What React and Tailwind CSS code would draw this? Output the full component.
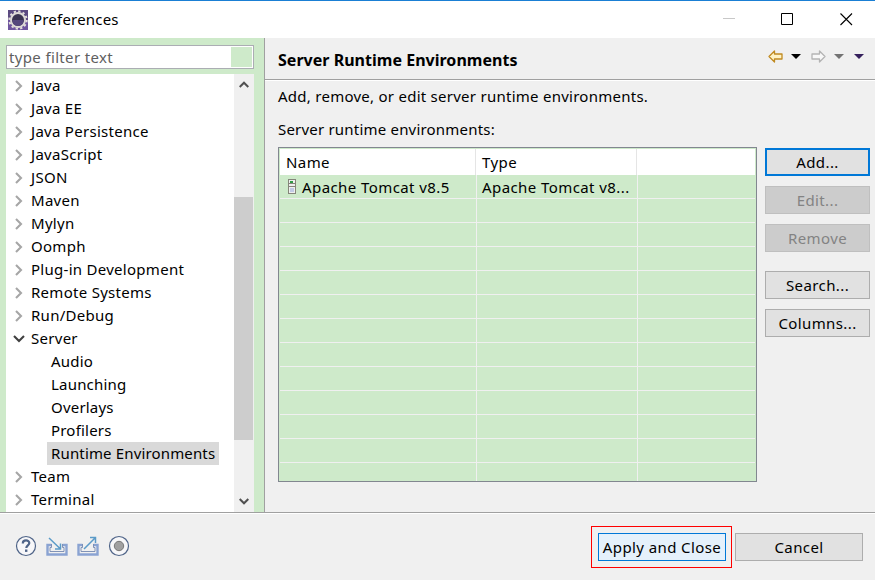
import React from "react";

const treeItems = [
  { label: "Java" },
  { label: "Java EE" },
  { label: "Java Persistence" },
  { label: "JavaScript" },
  { label: "JSON" },
  { label: "Maven" },
  { label: "Mylyn" },
  { label: "Oomph" },
  { label: "Plug-in Development" },
  { label: "Remote Systems" },
  { label: "Run/Debug" },
  { label: "Server", open: true },
  { label: "Audio", child: true },
  { label: "Launching", child: true },
  { label: "Overlays", child: true },
  { label: "Profilers", child: true },
  { label: "Runtime Environments", child: true, selected: true },
  { label: "Team" },
  { label: "Terminal" },
];

const rows = [
  { name: "Apache Tomcat v8.5", type: "Apache Tomcat v8..." },
  ...Array(12).fill({}),
];

function GearIcon() {
  return (
    <svg width="20" height="20" viewBox="0 0 20 20">
      <rect width="20" height="20" fill="#5b4a80" />
      <rect y="10" width="20" height="10" fill="#6f559f" />
      <circle cx="10" cy="10" r="8.7" fill="none" stroke="#e4e0dc" strokeWidth="2" strokeDasharray="2.28 2.27" />
      <circle cx="10" cy="10" r="7" fill="#3a3350" stroke="#dedad6" strokeWidth="2" />
      <path d="M4.5 10h11v1.5a5.5 4.5 0 0 1-11 0z" fill="#55477c" />
    </svg>
  );
}

function Chevron({ open }) {
  return open ? (
    <svg width="12" height="8" viewBox="0 0 12 8" fill="none">
      <path d="M1 1l5 5 5-5" stroke="#404040" strokeWidth="2.1" />
    </svg>
  ) : (
    <svg width="8" height="12" viewBox="0 0 8 12" fill="none">
      <path d="M1 1l5 5-5 5" stroke="#a6a6a6" strokeWidth="2.1" />
    </svg>
  );
}

function ScrollArrow({ down }) {
  return (
    <svg width="10" height="7" viewBox="0 0 10 7" fill="none">
      <path d={down ? "M0.7 1l4.3 4.3L9.3 1" : "M0.7 6L5 1.7 9.3 6"} stroke="#505050" strokeWidth="2" />
    </svg>
  );
}

function Arrow({ forward }) {
  return (
    <svg width="15" height="13" viewBox="0 0 15 13">
      <path
        d={forward ? "M14 6.5L8.5 1v3h-7.5v5h7.5v3z" : "M1 6.5L6.5 1v3h7.5v5h-7.5v3z"}
        fill={forward ? "#f8f8f8" : "#fff3c4"}
        stroke={forward ? "#b4b4b4" : "#c08a20"}
        strokeWidth="1.3"
        strokeLinejoin="round"
      />
    </svg>
  );
}

function Caret({ color }) {
  return (
    <svg width="10" height="5" viewBox="0 0 10 5">
      <path d="M0 0h10L5 5z" fill={color} />
    </svg>
  );
}

function ServerIcon() {
  return (
    <svg width="8" height="15" viewBox="0 0 8 15">
      <rect x="0.5" y="0.5" width="7" height="14" fill="#eef0ee" stroke="#85857a" />
      <path d="M1 4.5h6M1 7.5h6" stroke="#85857a" />
      <rect x="2" y="2" width="3" height="2" fill="#2f9a45" />
      <rect x="2" y="9" width="4" height="4" fill="#c3cbe6" />
    </svg>
  );
}

function TrayIcon({ exporting }) {
  return (
    <svg width="22" height="20" viewBox="0 0 22 20" fill="none">
      <path d="M5.5 9H1.5v9.5h19V9h-4" stroke="#8aa3d2" strokeWidth="2.4" />
      <path d="M5.5 8v3.5h-1.5v4h14v-4h-1.5V8" stroke="#7488b0" strokeWidth="0.9" />
      {exporting ? (
        <path d="M7 13L18 2M13 1.5h5.5V7" stroke="#5b9bc8" strokeWidth="1.5" />
      ) : (
        <path d="M3 2l11 10.5M14.5 7.5V13H9" stroke="#5b9bc8" strokeWidth="1.5" />
      )}
    </svg>
  );
}

function Button({ children, className }) {
  return (
    <button className={`flex h-7 items-center justify-center whitespace-nowrap leading-[23px] tracking-[0.4px] ${className}`}>
      {children}
    </button>
  );
}

export default function App() {
  return (
    <div className="flex h-[580px] w-[875px] flex-col overflow-hidden bg-[#f0f0f0] font-['Noto_Sans','Open_Sans',sans-serif] text-[15px] leading-[23px] tracking-[0.2px] text-black">
      {/* Title bar */}
      <header className="flex h-[38px] shrink-0 items-center border-t border-[#1a7fd4] bg-white pl-2">
        <GearIcon />
        <span className="ml-[5px] flex-1">Preferences</span>
        <svg width="130" height="13" viewBox="0 0 130 13" fill="none" className="mr-[22px]">
          <path d="M0 5.5h12" stroke="#c8c8c8" />
          <path d="M58.5 0.5h11v11h-11z" stroke="#000" />
          <path d="M117.5 0.5l11.5 11.5M129 0.5l-11.5 11.5" stroke="#000" strokeWidth="1.1" />
        </svg>
      </header>

      <div className="flex h-[474px] shrink-0">
        {/* Navigation */}
        <aside className="flex w-[264px] shrink-0 flex-col bg-[#ceeaca] pl-1.5 pr-2.5 pt-[7px]">
          <div className="flex h-6 shrink-0 items-center justify-between border border-[#abadb3] bg-white pl-0.5 pr-px tracking-[0.35px] text-[#606060]">
            <span>type filter text</span>
            <div className="h-5 w-[21px] bg-[#ceeaca]" />
          </div>
          <div className="mt-[5px] flex min-h-0 flex-1 bg-white">
            <ul className="flex-1">
              {treeItems.map((item) => (
                <li key={item.label} className="flex h-[23px] items-center">
                  {!item.child && (
                    <span className="flex w-[25px] justify-center pt-px">
                      <Chevron open={item.open} />
                    </span>
                  )}
                  <span
                    className={`whitespace-nowrap ${item.child ? "ml-[41px] px-1" : "tracking-[0.28px]"} ${item.selected ? "w-[172px] bg-[#d9d9d9] tracking-[0.15px]" : ""}`}
                  >
                    {item.label}
                  </span>
                </li>
              ))}
            </ul>
            <div className="flex w-5 flex-col items-center justify-between bg-[#f0f0f0] pb-[7px] pt-[7px]">
              <ScrollArrow />
              <div className="mb-[58px] mr-px mt-auto h-[243px] w-[19px] bg-[#cdcdcd]" />
              <ScrollArrow down />
            </div>
          </div>
        </aside>

        {/* Server runtime page */}
        <main className="flex-1 border-l border-[#a0a0a0]">
          <div className="flex h-[42px] items-center justify-between border-b border-[#a0a0a0] pl-[13px] pr-[11px] shadow-[0_1px_0_white]">
            <h1 className="pt-0.5 text-base font-bold tracking-[0.02px]">Server Runtime Environments</h1>
            <div className="flex items-center pb-1">
              <Arrow />
              <span className="ml-2 mr-2.5"><Caret color="#000" /></span>
              <Arrow forward />
              <span className="ml-2 mr-2.5"><Caret color="#737373" /></span>
              <Caret color="#35205c" />
            </div>
          </div>
          <p className="pl-[13px] pt-[5px] tracking-[0.26px]">Add, remove, or edit server runtime environments.</p>
          <p className="pl-[13px] pt-2.5">Server runtime environments:</p>
          <div className="flex pl-[13px] pt-1.5">
            <div className="h-[335px] w-[479px] shrink-0 overflow-hidden border border-[#828790] bg-[#ceeaca] p-px tracking-[0.42px]">
              <div className="grid h-[26px] grid-cols-[196px_161px_1fr] bg-white">
                <div className="border-r border-[#e5e5e5] pl-1.5 pt-0.5">Name</div>
                <div className="border-r border-[#e5e5e5] pl-1.5 pt-0.5">Type</div>
                <div />
              </div>
              {rows.map((row, i) => (
                <div
                  key={i}
                  className="grid h-6 grid-cols-[197px_161px_1fr] border-b border-[#f0f0f0]"
                >
                  <div className="flex items-start border-r border-[#f0f0f0] pl-2 pt-px">
                    {row.name && (
                      <span className="pt-[3px]">
                        <ServerIcon />
                      </span>
                    )}
                    <span className="ml-1.5">{row.name}</span>
                  </div>
                  <div className="border-r border-[#f0f0f0] pl-[5px] pt-px">{row.type}</div>
                  <div />
                </div>
              ))}
            </div>
            <div className="ml-2 flex w-[105px] flex-col pt-px">
              <Button className="border-2 border-[#0078d7] bg-[#e1e1e1]">Add...</Button>
              <Button className="mt-2.5 border border-[#bfbfbf] bg-[#cccccc] text-[#838383]">Edit...</Button>
              <Button className="mt-2.5 border border-[#bfbfbf] bg-[#cccccc] text-[#838383]">Remove</Button>
              <Button className="mt-[19px] border border-[#adadad] bg-[#e1e1e1]">Search...</Button>
              <Button className="mt-2.5 border border-[#adadad] bg-[#e1e1e1]">Columns...</Button>
            </div>
          </div>
        </main>
      </div>

      {/* Footer */}
      <footer className="flex flex-1 items-center border-t border-[#a0a0a0] pl-[15px] pr-3 shadow-[inset_0_1px_0_white]">
        <div className="flex flex-1 items-center gap-[9px] pb-0.5">
          <svg width="22" height="22" viewBox="0 0 22 22">
            <circle cx="11" cy="11" r="9.5" fill="#f7f7f9" stroke="#4f6488" strokeWidth="1.2" />
            <path d="M7.8 8.4c0-4 6.5-3.8 6.5-.4 0 2.3-3 2.5-3 5" fill="none" stroke="#4f6488" strokeWidth="2.2" />
            <rect x="10" y="14.5" width="2.4" height="2.4" fill="#4f6488" />
          </svg>
          <TrayIcon />
          <TrayIcon exporting />
          <svg width="22" height="22" viewBox="0 0 22 22">
            <circle cx="11" cy="11" r="9.5" fill="#f7f7f9" stroke="#4f6488" strokeWidth="1.2" />
            <circle cx="11" cy="11" r="4.7" fill="#a0a0a0" stroke="#777" />
          </svg>
        </div>
        <div className="mr-[3px] border border-[#ff0000] py-1.5 pl-1.5 pr-[5px]">
          <Button className="w-32 border border-[#0078d7] bg-[#e5f1fb] pt-0.5">Apply and Close</Button>
        </div>
        <Button className="w-32 border border-[#adadad] bg-[#e1e1e1] pt-0.5">Cancel</Button>
      </footer>
    </div>
  );
}
